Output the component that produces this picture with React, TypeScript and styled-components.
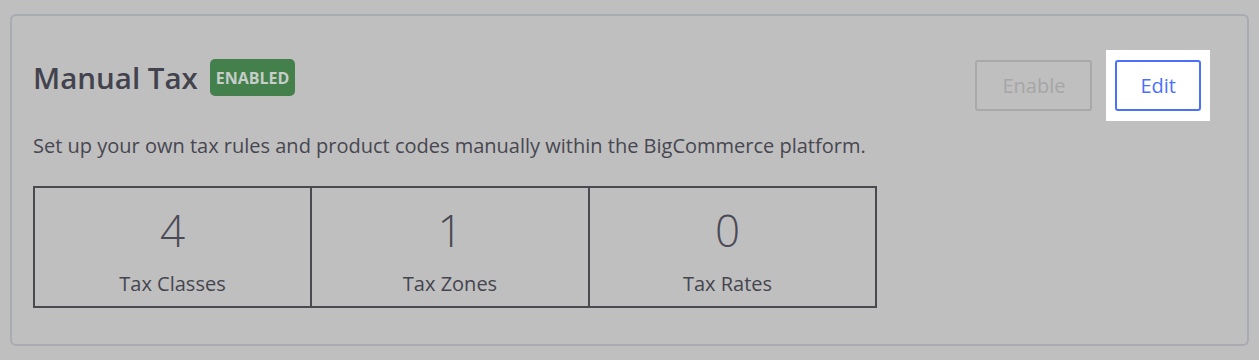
import styled, { createGlobalStyle } from "styled-components";

const GlobalStyle = createGlobalStyle`
  body {
    margin: 0;
    background: #bfbfbf;
    font-family: "Open Sans", "Liberation Sans", sans-serif;
  }
`;

const Page = styled.div`
  padding: 14px 10px 0 10px;
`;

const Card = styled.section`
  box-sizing: border-box;
  width: 1239px;
  height: 332px;
  border: 2px solid #a8abb1;
  border-radius: 6px;
  padding: 34px 37px 0 21px;
`;

const Header = styled.div`
  display: flex;
  justify-content: space-between;
  align-items: flex-start;
`;

const TitleGroup = styled.div`
  display: flex;
  align-items: center;
  gap: 12px;
  padding-top: 9px;
`;

const Title = styled.h1`
  margin: 0;
  font-size: 29.5px;
  font-weight: 600;
  line-height: 37px;
  color: #43434e;
`;

const Badge = styled.span`
  display: inline-flex;
  align-items: center;
  height: 37px;
  padding: 0 6px;
  border-radius: 5px;
  background: #44804b;
  color: #c6cdca;
  font-size: 16px;
  font-weight: 700;
`;

const Actions = styled.div`
  display: flex;
  align-items: center;
  gap: 14px;
`;

const Button = styled.button<{ $primary?: boolean }>`
  box-sizing: border-box;
  height: 51px;
  padding: 0 ${(p) => (p.$primary ? "23px" : "25px")};
  border-radius: 3px;
  background: ${(p) => (p.$primary ? "#ffffff" : "transparent")};
  border: 2px solid ${(p) => (p.$primary ? "#4b71fc" : "#a9a9a9")};
  color: ${(p) => (p.$primary ? "#4b71fc" : "#a6a6a6")};
  font-family: inherit;
  font-size: 20px;
`;

const Spotlight = styled.div`
  background: #ffffff;
  padding: 10px 9px;
`;

const Description = styled.p`
  margin: 12px 0 0 0;
  font-size: 20px;
  line-height: 26px;
  color: #474751;
`;

const Stats = styled.div`
  display: flex;
  margin-top: 27px;
  width: max-content;
  border: 2px solid #494950;
`;

const Stat = styled.div<{ $width: number; $shift?: number }>`
  box-sizing: border-box;
  width: ${(p) => p.$width}px;
  height: 118px;
  display: flex;
  flex-direction: column;
  align-items: center;
  padding-top: 17px;
  padding-right: ${(p) => p.$shift ?? 0}px;
  & + & {
    border-left: 2px solid #494950;
  }
`;

const StatValue = styled.div`
  font-size: 44px;
  font-weight: 300;
  line-height: 50px;
  color: #4a4a55;
`;

const StatLabel = styled.div`
  margin-top: 16px;
  font-size: 20px;
  line-height: 26px;
  color: #45454f;
`;

const stats = [
  { value: "4", label: "Tax Classes", width: 275 },
  { value: "1", label: "Tax Zones", width: 278 },
  { value: "0", label: "Tax Rates", width: 287, shift: 10 },
];

export default function App() {
  return (
    <>
      <GlobalStyle />
      <Page>
        <Card>
          <Header>
            <TitleGroup>
              <Title>Manual Tax</Title>
              <Badge>ENABLED</Badge>
            </TitleGroup>
            <Actions>
              <Button>Enable</Button>
              <Spotlight>
                <Button $primary>Edit</Button>
              </Spotlight>
            </Actions>
          </Header>
          <Description>
            Set up your own tax rules and product codes manually within the BigCommerce platform.
          </Description>
          <Stats>
            {stats.map((s) => (
              <Stat key={s.label} $width={s.width} $shift={s.shift}>
                <StatValue>{s.value}</StatValue>
                <StatLabel>{s.label}</StatLabel>
              </Stat>
            ))}
          </Stats>
        </Card>
      </Page>
    </>
  );
}
